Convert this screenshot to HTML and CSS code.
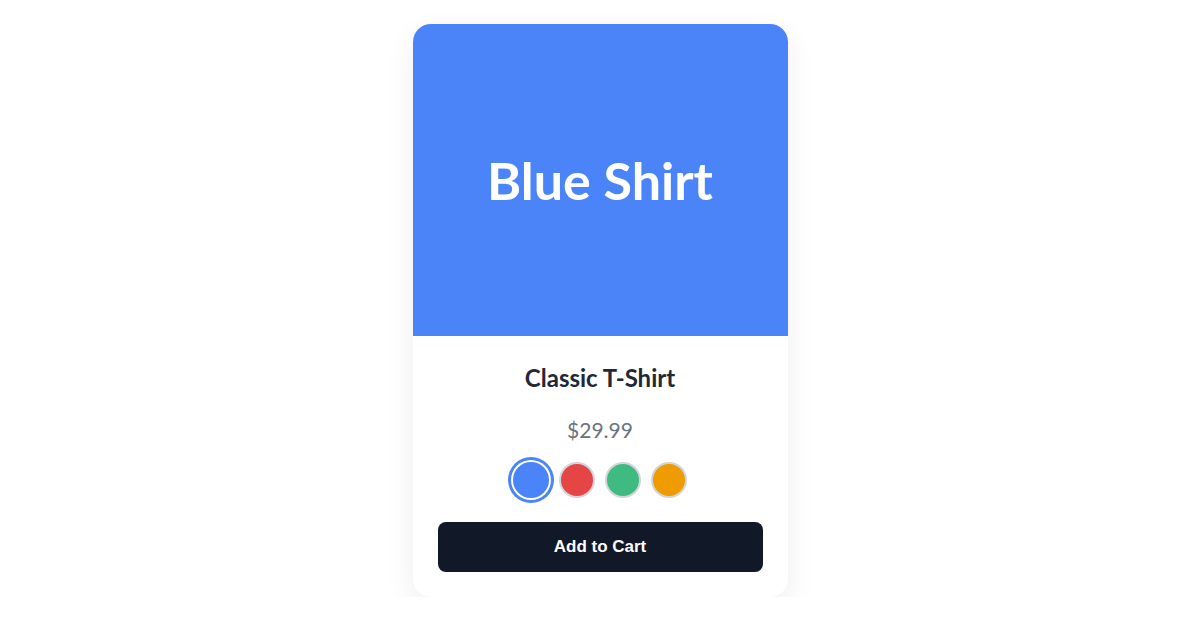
FILE: index.html
```html
<!DOCTYPE html>
<html lang="en">
<head>
    <meta charset="UTF-8">
    <meta name="viewport" content="width=device-width, initial-scale=1.0">
    <title>Classic T-Shirt</title>
    <link rel="stylesheet" href="styles.css">
</head>
<body>
    <div class="card">
        <div class="preview">Blue Shirt</div>
        <div class="details">
            <h2 class="title">Classic T-Shirt</h2>
            <div class="price">$29.99</div>
            <div class="swatches">
                <button class="swatch blue selected" aria-label="Blue"></button>
                <button class="swatch red" aria-label="Red"></button>
                <button class="swatch green" aria-label="Green"></button>
                <button class="swatch orange" aria-label="Orange"></button>
            </div>
            <button class="add-to-cart">Add to Cart</button>
        </div>
    </div>
</body>
</html>
```

FILE: styles.css
```css
body {
    margin: 0;
    padding-top: 24px;
    display: flex;
    justify-content: center;
    background: #fff;
    font-family: 'Lato', sans-serif;
}

.card {
    width: 375px;
    background: #fff;
    border-radius: 18px;
    overflow: hidden;
    box-shadow: 0 10px 30px rgba(0, 0, 0, 0.07);
}

.preview {
    height: 312px;
    display: flex;
    justify-content: center;
    align-items: center;
    background: #4a84f8;
    color: #fff;
    font-size: 52px;
    font-weight: 700;
}

.details {
    padding: 26px 25px 25px;
    text-align: center;
}

.title {
    margin: 0;
    font-size: 24px;
    font-weight: 700;
    color: #1f2937;
    line-height: 32px;
}

.price {
    margin-top: 24px;
    font-size: 21px;
    color: #6b7280;
    line-height: 24px;
}

.swatches {
    display: flex;
    justify-content: center;
    gap: 10px;
    margin-top: 20px;
}

.swatch {
    width: 36px;
    height: 36px;
    padding: 0;
    border-radius: 50%;
    border: 2px solid #d1d5db;
    cursor: pointer;
}

.swatch.selected {
    border-color: #4a84f8;
    box-shadow: 0 0 0 2px #fff, 0 0 0 5px #4a84f8;
}

.blue { background: #4a84f8; }
.red { background: #e64545; }
.green { background: #3fba80; }
.orange { background: #ee9c00; }

.add-to-cart {
    display: block;
    width: 100%;
    height: 50px;
    margin-top: 24px;
    border: none;
    border-radius: 8px;
    background: #111827;
    color: #fff;
    font-family: 'Liberation Sans', Arial, sans-serif;
    font-size: 17px;
    font-weight: 700;
    cursor: pointer;
}
```
